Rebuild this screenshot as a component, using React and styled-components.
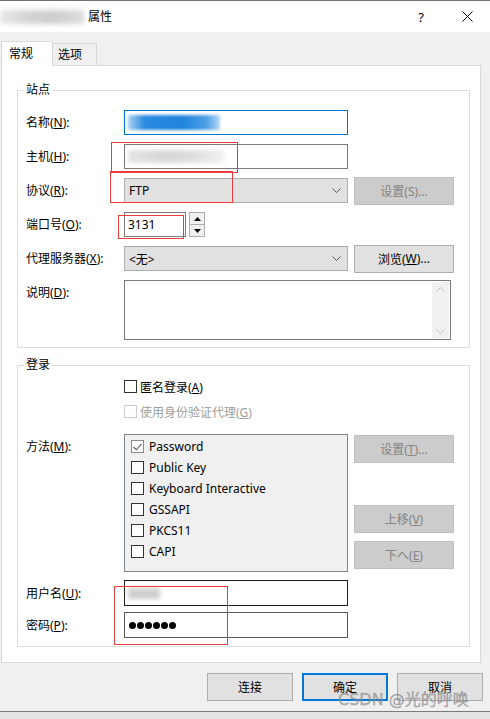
import React from 'react'
import styled, { createGlobalStyle } from 'styled-components'

const GlobalStyle = createGlobalStyle`
  html, body {
    margin: 0;
    padding: 0;
    background: #e4e4e4;
  }
  body {
    font-family: "Noto Sans", "Noto Sans CJK SC", sans-serif;
    font-size: 12px;
    color: #000;
  }
`

const Window = styled.div`
  position: relative;
  width: 490px;
  height: 712px;
  box-sizing: border-box;
  border-top: 1px solid #707070;
  border-bottom: 1px solid #7a7a7a;
  background: #f0f0f0;
  display: flex;
  flex-direction: column;
`

const TitleBar = styled.div`
  height: 31px;
  background: #fff;
  display: flex;
  align-items: center;
  flex-shrink: 0;
`

// smudged window name before "属性"
const TitleSmudge = styled.div`
  width: 84px;
  height: 14px;
  background: linear-gradient(90deg, #e8e8e8, #d6d6d6 30%, #cdcdcd 60%, #dcdcdc);
  filter: blur(2.5px);
`

const TitleText = styled.span`
  margin-left: 4px;
  font-size: 12px;
  line-height: 16px;
`

const CaptionButtons = styled.div`
  margin-left: auto;
  display: flex;
  height: 100%;
`

const CaptionButton = styled.div`
  width: 46px;
  height: 100%;
  display: flex;
  align-items: center;
  justify-content: center;
  font-size: 13px;
`

const Body = styled.div`
  flex: 1;
  display: flex;
  flex-direction: column;
  padding: 9px 7px 0 1px;
`

const Tabs = styled.div`
  display: flex;
  align-items: flex-end;
  height: 24px;
  position: relative;
  z-index: 1;
`

const Tab = styled.div`
  box-sizing: border-box;
  width: ${p => (p.$active ? 52 : 45)}px;
  height: ${p => (p.$active ? 25 : 22)}px;
  margin-bottom: ${p => (p.$active ? -1 : 0)}px;
  margin-left: ${p => (p.$active ? 0 : -1)}px;
  padding-left: ${p => (p.$active ? 7 : 5)}px;
  padding-top: ${p => (p.$active ? 3 : 2)}px;
  background: ${p => (p.$active ? '#fff' : '#f0f0f0')};
  border: 1px solid #d9d9d9;
  border-bottom: none;
  line-height: 17px;
  font-size: 12px;
`

const Panel = styled.div`
  width: 480px;
  height: 598px;
  box-sizing: border-box;
  background: #fff;
  border: 1px solid #d9d9d9;
  padding: 0 0 0 15px;
`

const Group = styled.fieldset`
  width: 453px;
  box-sizing: border-box;
  min-width: 0;
  margin: ${p => p.$mt}px 0 0 0;
  padding: ${p => p.$pt}px 0 ${p => p.$pb}px 8px;
  border: 1px solid #dcdcdc;
`

const Legend = styled.legend`
  padding: 0 2px;
  margin-left: -2px;
  font-size: 12px;
  line-height: 16px;
`

const Row = styled.div`
  display: grid;
  grid-template-columns: 92px 224px 100px;
  column-gap: 6px;
  align-items: ${p => p.$align || 'center'};
  height: ${p => p.$h}px;
  margin-top: ${p => p.$mt || 0}px;
`

const Label = styled.span`
  font-size: 12px;
  line-height: 17px;
  white-space: nowrap;
  padding-top: ${p => p.$pt || 0}px;
  align-self: ${p => (p.$pt ? 'start' : 'center')};
  u {
    text-underline-offset: 1px;
  }
`

const Field = styled.div`
  box-sizing: border-box;
  height: ${p => p.$h || 25}px;
  width: ${p => p.$w || 224}px;
  border: 1px solid ${p => p.$border || '#7a7a7a'};
  background: #fff;
  display: flex;
  align-items: center;
  gap: 1px;
  padding-left: ${p => p.$pl || 3}px;
  font-size: 12px;
  overflow: hidden;
`

const Smudge = styled.div`
  width: ${p => p.$w}px;
  height: ${p => p.$h}px;
  background: ${p => p.$bg};
  filter: blur(${p => p.$blur || 2}px);
`

// masked password character
const Dot = styled.span`
  width: 7px;
  height: 7px;
  border-radius: 50%;
  background: #000;
`

const Select = styled.div`
  box-sizing: border-box;
  height: 25px;
  width: 224px;
  border: 1px solid #adadad;
  background: #e1e1e1;
  display: flex;
  align-items: center;
  justify-content: space-between;
  padding: 0 6px 0 4px;
  font-size: 12px;
`

const Button = styled.div`
  box-sizing: border-box;
  width: ${p => p.$w || 100}px;
  height: 28px;
  margin: ${p => p.$m || '-2px 0'};
  display: flex;
  align-items: center;
  justify-content: center;
  font-size: 12px;
  background: ${p => (p.$disabled ? '#cccccc' : '#e1e1e1')};
  color: ${p => (p.$disabled ? '#838383' : '#000')};
  border: ${p => (p.$primary ? '2px solid #0078d7' : `1px solid ${p.$disabled ? '#bfbfbf' : '#adadad'}`)};
  u {
    text-underline-offset: 1px;
  }
`

const PortWrap = styled.div`
  display: flex;
  gap: 3px;
  align-items: center;
`

const Spinner = styled.div`
  width: 16px;
  height: 25px;
  display: flex;
  flex-direction: column;
`

const SpinHalf = styled.div`
  flex: 1;
  box-sizing: border-box;
  border: 1px solid #adadad;
  margin-top: ${p => (p.$down ? -1 : 0)}px;
  background: #f0f0f0;
  display: flex;
  align-items: center;
  justify-content: center;
`

const TextArea = styled.div`
  grid-column: 2 / 4;
  box-sizing: border-box;
  width: 327px;
  height: 60px;
  border: 1px solid #7a7a7a;
  background: #fff;
  display: flex;
  justify-content: flex-end;
  padding: 1px;
`

const ScrollTrack = styled.div`
  width: 17px;
  background: #f0f0f0;
  display: flex;
  flex-direction: column;
  justify-content: space-between;
  align-items: center;
  padding: 5px 0 4px;
`

const CheckRow = styled.label`
  display: flex;
  align-items: center;
  gap: ${p => p.$gap || 3}px;
  height: ${p => p.$h || 17}px;
  color: ${p => (p.$disabled ? '#9d9d9d' : '#000')};
  font-size: 12px;
  white-space: nowrap;
  u {
    text-underline-offset: 1px;
  }
`

const Box = styled.span`
  box-sizing: border-box;
  width: 13px;
  height: 13px;
  border: 1px solid ${p => p.$color || '#333'};
  background: #fff;
  display: flex;
  align-items: center;
  justify-content: center;
  flex-shrink: 0;
`

const ListBox = styled.div`
  box-sizing: border-box;
  width: 224px;
  height: 138px;
  border: 1px solid #828790;
  background: #f0f0f0;
  padding: 1px 0 0 6px;
`

const SideButtons = styled.div`
  align-self: start;
  display: flex;
  flex-direction: column;
  padding-top: 1px;
`

const Footer = styled.div`
  display: flex;
  justify-content: flex-end;
  gap: 9px;
  margin-top: 10px;
`

const Mark = styled.div`
  position: absolute;
  border: 1px solid #ea3d3d;
  pointer-events: none;
`

const Watermark = styled.div`
  position: absolute;
  left: 338px;
  top: 689px;
  font-family: "DejaVu Sans", "Noto Sans CJK SC", sans-serif;
  font-size: 16px;
  line-height: 20px;
  color: rgba(150, 150, 150, 0.7);
  -webkit-text-stroke: 0.4px rgba(120, 120, 120, 0.6);
  white-space: nowrap;
`

const Chevron = ({ up, color = '#555' }) => (
  <svg width="9" height="5" viewBox="0 0 9 5">
    <path d={up ? 'M0.5 4.5 L4.5 0.5 L8.5 4.5' : 'M0.5 0.5 L4.5 4.5 L8.5 0.5'} fill="none" stroke={color} strokeWidth="1" />
  </svg>
)

const Tri = ({ down }) => (
  <svg width="7" height="4" viewBox="0 0 7 4">
    <path d={down ? 'M0 0 L7 0 L3.5 4 Z' : 'M0 4 L7 4 L3.5 0 Z'} fill="#000" />
  </svg>
)

const Check = () => (
  <svg width="9" height="8" viewBox="0 0 9 8">
    <path d="M0.5 4 L3.3 6.8 L8.5 0.8" fill="none" stroke="#555" strokeWidth="1.1" />
  </svg>
)

const methods = [
  { name: 'Password', checked: true },
  { name: 'Public Key' },
  { name: 'Keyboard Interactive' },
  { name: 'GSSAPI' },
  { name: 'PKCS11' },
  { name: 'CAPI' },
]

export default function App() {
  return (
    <>
      <GlobalStyle />
      <Window>
        <TitleBar>
          <TitleSmudge />
          <TitleText>属性</TitleText>
          <CaptionButtons>
            <CaptionButton>?</CaptionButton>
            <CaptionButton>
              <svg width="11" height="11" viewBox="0 0 11 11">
                <path d="M0.5 0.5 L10.5 10.5 M10.5 0.5 L0.5 10.5" stroke="#000" strokeWidth="1" />
              </svg>
            </CaptionButton>
          </CaptionButtons>
        </TitleBar>

        <Body>
          <Tabs>
            <Tab $active>常规</Tab>
            <Tab>选项</Tab>
          </Tabs>
          <Panel>
            <Group $mt={16} $pt={12} $pb={7}>
              <Legend>站点</Legend>
              <Row $h={25}>
                <Label>名称(<u>N</u>):</Label>
                <Field $border="#0078d7">
                  <Smudge $w={92} $h={15} $blur={1.6}
                    $bg="linear-gradient(90deg, #a9d1f3, #2a8ae0 18%, #1f84dd 60%, #4f9fe6 85%, #b7d8f4)" />
                </Field>
              </Row>
              <Row $h={25} $mt={9}>
                <Label>主机(<u>H</u>):</Label>
                <Field>
                  <Smudge $w={96} $h={13} $blur={2.2}
                    $bg="linear-gradient(90deg, #e4e4e4, #d6d6d6 40%, #dfdfdf 70%, #f0f0f0)" />
                </Field>
              </Row>
              <Row $h={25} $mt={9}>
                <Label>协议(<u>R</u>):</Label>
                <Select>
                  FTP
                  <Chevron />
                </Select>
                <Button $disabled>设置(S)...</Button>
              </Row>
              <Row $h={25} $mt={9}>
                <Label>端口号(<u>O</u>):</Label>
                <PortWrap>
                  <Field $w={62}>3131</Field>
                  <Spinner>
                    <SpinHalf><Tri /></SpinHalf>
                    <SpinHalf $down><Tri down /></SpinHalf>
                  </Spinner>
                </PortWrap>
              </Row>
              <Row $h={25} $mt={9}>
                <Label>代理服务器(<u>X</u>):</Label>
                <Select>
                  &lt;无&gt;
                  <Chevron />
                </Select>
                <Button>浏览(<u>W</u>)...</Button>
              </Row>
              <Row $h={60} $mt={9} $align="start">
                <Label $pt={4}>说明(<u>D</u>):</Label>
                <TextArea>
                  <ScrollTrack>
                    <Chevron up color="#c2c2c2" />
                    <Chevron color="#c2c2c2" />
                  </ScrollTrack>
                </TextArea>
              </Row>
            </Group>

            <Group $mt={9} $pt={5} $pb={8}>
              <Legend>登录</Legend>
              <Row $h={17}>
                <span />
                <CheckRow>
                  <Box />
                  <span>匿名登录(<u>A</u>)</span>
                </CheckRow>
              </Row>
              <Row $h={17} $mt={8}>
                <span />
                <CheckRow $disabled>
                  <Box $color="#cccccc" />
                  <span>使用身份验证代理(<u>G</u>)</span>
                </CheckRow>
              </Row>
              <Row $h={138} $mt={14} $align="start">
                <Label $pt={4}>方法(<u>M</u>):</Label>
                <ListBox>
                  {methods.map(m => (
                    <CheckRow key={m.name} $h={21} $gap={5}>
                      <Box $color={m.checked ? '#8a8a8a' : '#333'}>{m.checked && <Check />}</Box>
                      <span>{m.name}</span>
                    </CheckRow>
                  ))}
                </ListBox>
                <SideButtons>
                  <Button $disabled $m="0">设置(<u>T</u>)...</Button>
                  <Button $disabled $m="42px 0 0">上移(<u>V</u>)</Button>
                  <Button $disabled $m="8px 0 0">下へ(<u>E</u>)</Button>
                </SideButtons>
              </Row>
              <Row $h={26} $mt={8}>
                <Label>用户名(<u>U</u>):</Label>
                <Field $h={26} $border="#1e1e1e">
                  <Smudge $w={32} $h={11} $blur={2} $bg="#cfcfcf" />
                </Field>
              </Row>
              <Row $h={26} $mt={6}>
                <Label>密码(<u>P</u>):</Label>
                <Field $h={26} $border="#5a5a5a" $pl={4}>
                  {[0, 1, 2, 3, 4, 5].map(i => <Dot key={i} />)}
                </Field>
              </Row>
            </Group>
          </Panel>

          <Footer>
            <Button $w={86} $m="0">连接</Button>
            <Button $w={86} $m="0" $primary>确定</Button>
            <Button $w={86} $m="0">取消</Button>
          </Footer>
        </Body>

        <Mark style={{ left: 111, top: 141, width: 125, height: 29 }} />
        <Mark style={{ left: 110, top: 170, width: 121, height: 30 }} />
        <Mark style={{ left: 118, top: 214, width: 64, height: 22 }} />
        <Mark style={{ left: 114, top: 585, width: 112, height: 57 }} />
        <Watermark>CSDN @光的呼唤</Watermark>
      </Window>
    </>
  )
}
